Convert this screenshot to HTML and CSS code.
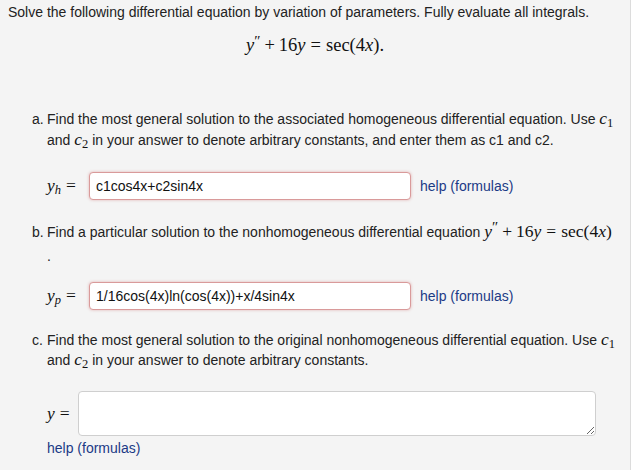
FILE: index.html
```html
<!DOCTYPE html>
<html>
<head>
<meta charset="utf-8">
<link rel="stylesheet" href="styles.css">
</head>
<body>
<div class="panel">
  <p class="intro">Solve the following differential equation by variation of parameters. Fully evaluate all integrals.</p>
  <div class="display"><span class="m"><i>y</i><span class="pr">″</span><span class="bin">+</span>16<i>y</i><span class="rel">=</span>sec(4<i>x</i>).</span></div>

  <div class="part pa">
    <span class="lbl">a.</span>
    <div class="ptext">Find the most general solution to the associated homogeneous differential equation. Use <span class="m"><i>c</i><sub>1</sub></span><br>and <span class="m"><i>c</i><sub>2</sub></span> in your answer to denote arbitrary constants, and enter them as c1 and c2.</div>
  </div>
  <div class="ansrow ra">
    <span class="mlabel"><span class="m"><i>y<sub>h</sub></i><span class="rel">=</span></span></span>
    <input class="ans bad" type="text" value="c1cos4x+c2sin4x">
    <a class="help" href="#">help (formulas)</a>
  </div>

  <div class="part pb">
    <span class="lbl">b.</span>
    <div class="ptext">Find a particular solution to the nonhomogeneous differential equation <span class="m"><i>y</i><span class="pr">″</span><span class="bin">+</span>16<i>y</i><span class="rel">=</span>sec(4<i>x</i>)</span><br>.</div>
  </div>
  <div class="ansrow rb">
    <span class="mlabel"><span class="m"><i>y<sub>p</sub></i><span class="rel">=</span></span></span>
    <input class="ans bad" type="text" value="1/16cos(4x)ln(cos(4x))+x/4sin4x">
    <a class="help" href="#">help (formulas)</a>
  </div>

  <div class="part pc">
    <span class="lbl">c.</span>
    <div class="ptext">Find the most general solution to the original nonhomogeneous differential equation. Use <span class="m"><i>c</i><sub>1</sub></span><br>and <span class="m"><i>c</i><sub>2</sub></span> in your answer to denote arbitrary constants.</div>
  </div>
  <div class="ansrow rc">
    <span class="mlabel short"><span class="m"><i>y</i><span class="rel">=</span></span></span>
    <textarea class="area"></textarea>
  </div>
  <a class="help helpc" href="#">help (formulas)</a>
</div>
</body>
</html>
```

FILE: styles.css
```css
html, body {
  margin: 0;
  padding: 0;
  background: #ffffff;
}
body {
  font-family: "Liberation Sans", Arial, sans-serif;
  font-size: 14px;
  color: #222;
}
.panel {
  width: 631px;
  height: 470px;
  box-sizing: border-box;
  background: #f4f4f4;
  border-right: 1px solid #dcdcdc;
  padding: 3px 0 0 6px;
  display: flex;
  flex-direction: column;
  align-items: flex-start;
}
.intro {
  margin: 0;
  line-height: 18px;
  padding-left: 2px;
  white-space: nowrap;
}
.m {
  font-family: "Liberation Serif", "DejaVu Serif", serif;
  font-size: 17.5px;
  line-height: 14px;
  color: #111;
  white-space: nowrap;
}
.m i {
  font-style: italic;
}
.m sub {
  font-size: 12.5px;
  vertical-align: -3px;
  line-height: 0;
}
.bin {
  margin: 0 4px;
}
.rel {
  margin: 0 5px;
}
.pr {
  font-size: 15px;
  vertical-align: 5px;
  line-height: 0;
  margin-left: 0;
}
.display {
  margin-top: 13px;
  align-self: stretch;
  text-align: center;
  line-height: 24px;
  padding-right: 6px;
}
.display .m {
  font-size: 18.5px;
}
.part {
  display: flex;
  margin-left: 26px;
  line-height: 21px;
  white-space: nowrap;
}
.lbl {
  width: 15px;
  flex: none;
}
.pa {
  margin-top: 51px;
}
.pb {
  margin-top: 20px;
  line-height: 24px;
}
.pc {
  margin-top: 20px;
}
.pc .ptext {
  line-height: 20px;
}
.ansrow {
  display: flex;
  align-items: center;
  margin-left: 41px;
}
.ra {
  margin-top: 21px;
}
.rb {
  margin-top: 14px;
}
.rc {
  margin-top: 21px;
}
.mlabel {
  width: 42px;
  flex: none;
}
.mlabel.short {
  width: 31px;
}
.mlabel .rel {
  margin-right: 0;
}
.ans {
  box-sizing: border-box;
  width: 322px;
  height: 28px;
  margin: 0;
  padding: 0 6px;
  font-family: "Liberation Sans", Arial, sans-serif;
  font-size: 14px;
  color: #111;
  background: #fff;
  border: 1px solid #d99a9a;
  border-radius: 4px;
  outline: none;
}
.ans.bad {
  box-shadow: 0 0 3px rgba(205, 100, 100, 0.45);
}
.help {
  margin-left: 9px;
  color: #1b3a86;
  text-decoration: none;
}
.area {
  box-sizing: border-box;
  width: 518px;
  height: 45px;
  margin: 0;
  padding: 4px 6px;
  background: #fff;
  border: 1px solid #cfcfcf;
  border-radius: 4px;
  font-family: "Liberation Sans", Arial, sans-serif;
  font-size: 14px;
  outline: none;
}
.helpc {
  margin-left: 41px;
  margin-top: 3px;
  line-height: 18px;
}
```
